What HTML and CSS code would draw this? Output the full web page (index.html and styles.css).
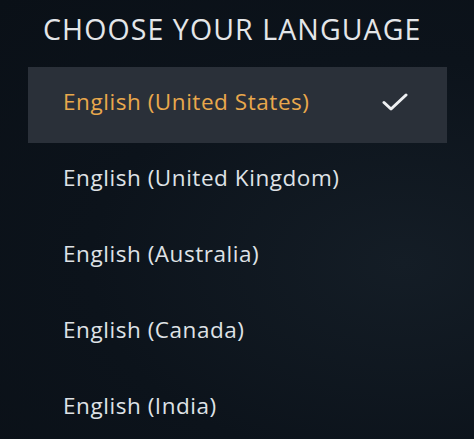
FILE: index.html
```html
<!DOCTYPE html>
<html lang="en">
<head>
    <meta charset="UTF-8">
    <meta name="viewport" content="width=device-width, initial-scale=1.0">
    <title>Choose your language</title>
    <link rel="stylesheet" href="styles.css">
</head>
<body>
    <main class="language-screen">
        <h1 class="title">CHOOSE YOUR LANGUAGE</h1>

        <ul class="languages">
            <li class="language selected">
                <span>English (United States)</span>
                <svg class="check" width="26" height="18" viewBox="0 0 26 18">
                    <path d="M2 9.5 L9 16 L24 2" fill="none" stroke="currentColor" stroke-width="3" stroke-linecap="round" stroke-linejoin="round"/>
                </svg>
            </li>
            <li class="language"><span>English (United Kingdom)</span></li>
            <li class="language"><span>English (Australia)</span></li>
            <li class="language"><span>English (Canada)</span></li>
            <li class="language"><span>English (India)</span></li>
        </ul>
    </main>
</body>
</html>
```

FILE: styles.css
```css
*{
    box-sizing: border-box;
}
body{
    margin: 0;
    padding: 0;
    font-family: 'Open Sans', 'Noto Sans', sans-serif;
    background: #0c121a;
}
.language-screen{
    width: 474px;
    height: 439px;
    overflow: hidden;
    padding: 10px 27px 0 28px;
    background: radial-gradient(ellipse at 85% 60%, #141d26 0%, #0c131b 55%, #0a1017 100%);
}
.title{
    margin: 0 0 18px 15px;
    font-size: 28.5px;
    font-weight: 400;
    letter-spacing: 1.1px;
    line-height: 39px;
    color: #e4e6e9;
    white-space: nowrap;
}
.languages{
    list-style: none;
    margin: 0;
    padding: 0;
}
.language{
    display: flex;
    align-items: center;
    justify-content: space-between;
    height: 76px;
    padding: 0 39px 7px 35px;
    font-size: 22.5px;
    font-weight: 500;
    letter-spacing: 0.55px;
    color: #dfe2e6;
}
.language.selected{
    background: #2a3039;
    color: #e9a84c;
}
.check{
    color: #eef0f2;
}
```
